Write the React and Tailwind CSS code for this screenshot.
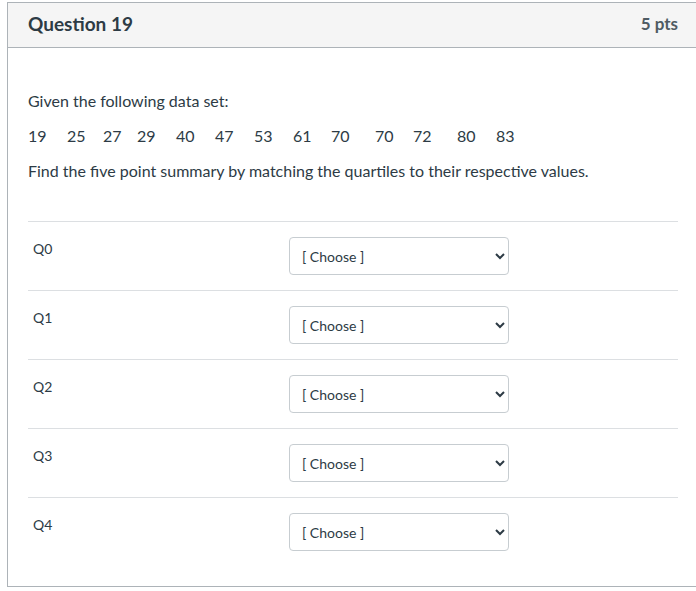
const numbers = [
  { n: '19', w: 'w-[39px]' },
  { n: '25', w: 'w-[36px]' },
  { n: '27', w: 'w-[34px]' },
  { n: '29', w: 'w-[39px]' },
  { n: '40', w: 'w-[39px]' },
  { n: '47', w: 'w-[39px]' },
  { n: '53', w: 'w-[39px]' },
  { n: '61', w: 'w-[38px]' },
  { n: '70', w: 'w-[44px]' },
  { n: '70', w: 'w-[38px]' },
  { n: '72', w: 'w-[44px]' },
  { n: '80', w: 'w-[39px]' },
  { n: '83', w: 'w-auto' },
];

const quartiles = ['Q0', 'Q1', 'Q2', 'Q3', 'Q4'];

const App = () => {
  return (
    <div className="w-[696px] h-[591px] overflow-hidden bg-white font-['Lato',sans-serif] text-[#2d3b45]">
      <div className="ml-[7px] mt-[2px] w-[692px] border border-[#adb3b8]">
        {/* Header */}
        <div className="h-[45px] flex items-center justify-between px-5 pb-[2px] bg-[#f5f5f5] border-b border-[#adb3b8]">
          <h2 className="text-[19px] font-bold">Question 19</h2>
          <span className="text-[17px] font-bold text-[#4f5b63]">5 pts</span>
        </div>

        {/* Body */}
        <div className="px-5 pt-[42px] pb-[20px] text-[16px]">
          <p className="leading-[22px]">Given the following data set:</p>
          <div className="flex mt-[13px] leading-[22px]">
            {numbers.map((item, i) => (
              <span key={i} className={item.w}>{item.n}</span>
            ))}
          </div>
          <p className="mt-[13px] leading-[22px]">
            Find the five point summary by matching the quartiles to their respective values.
          </p>

          <div className="mt-[39px]">
            {quartiles.map((q) => (
              <div key={q} className="flex border-t border-[#dcdfe2] pt-[15px] pb-[15px]">
                <div className="w-[261px] pl-[5px] pt-[1px] text-[14px] leading-[22px]">{q}</div>
                <select className="w-[220px] h-[38px] px-[8px] bg-white border border-[#c7cdd1] rounded-[4px] text-[14px] text-[#2d3b45]">
                  <option>[ Choose ]</option>
                </select>
              </div>
            ))}
          </div>
        </div>
      </div>
    </div>
  );
};

export default App;
